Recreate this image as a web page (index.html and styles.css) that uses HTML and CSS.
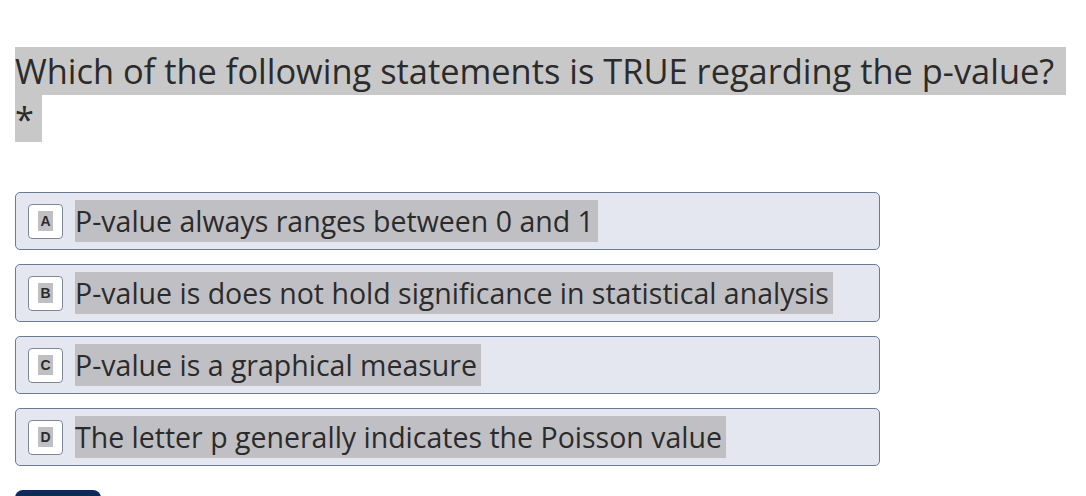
FILE: index.html
```html
<!DOCTYPE html>
<html lang="en">
<head>
  <meta charset="UTF-8">
  <title>Quiz Question</title>
  <link rel="stylesheet" href="styles.css">
</head>
<body>

  <!-- Question -->
  <div class="question">
    <span class="sel title-line">Which of the following statements is TRUE regarding the p-value?</span>
    <span class="sel title-line star">*</span>
  </div>

  <!-- Choices -->
  <div class="choices">
    <div class="choice">
      <span class="badge"><span class="sel-letter">A</span></span>
      <span class="sel choice-text">P-value always ranges between 0 and 1</span>
    </div>
    <div class="choice">
      <span class="badge"><span class="sel-letter">B</span></span>
      <span class="sel choice-text">P-value is does not hold significance in statistical analysis</span>
    </div>
    <div class="choice">
      <span class="badge"><span class="sel-letter">C</span></span>
      <span class="sel choice-text">P-value is a graphical measure</span>
    </div>
    <div class="choice">
      <span class="badge"><span class="sel-letter">D</span></span>
      <span class="sel choice-text">The letter p generally indicates the Poisson value</span>
    </div>
  </div>

  <!-- Submit button, only its top edge is in view -->
  <button class="submit" aria-label="Submit"></button>

</body>
</html>
```

FILE: styles.css
```css
html {
  overflow: hidden;
}

body {
  margin: 0;
  padding: 47px 0 0 15px;
  font-family: "Open Sans", "Noto Sans", sans-serif;
  color: #2b2b2b;
  background: #fff;
}

.sel {
  background: #c8c8c8;
}

.question {
  font-size: 34.4px;
  margin-bottom: 50px;
}

.title-line {
  display: inline-block;
  line-height: 47.5px;
  padding-right: 12px;
  vertical-align: top;
}

.star {
  display: block;
  width: fit-content;
  padding-right: 8px;
}

.choices {
  display: flex;
  flex-direction: column;
  gap: 14px;
  width: 865px;
}

.choice {
  display: flex;
  align-items: center;
  gap: 12px;
  height: 58px;
  box-sizing: border-box;
  padding: 0 12px;
  background: #e4e7ef;
  border: 1.5px solid #6d7a93;
  border-radius: 5px;
}

.badge {
  display: flex;
  align-items: center;
  justify-content: center;
  width: 35px;
  height: 35px;
  box-sizing: border-box;
  background: #fff;
  border: 1px solid #7d879a;
  border-radius: 4px;
  font-family: "Liberation Sans", Arial, sans-serif;
  font-weight: bold;
  font-size: 14px;
}

.sel-letter {
  background: #c0c0c4;
  padding: 2px 2px;
}

.choice-text {
  background: #c0c0c4;
  font-size: 28.5px;
  line-height: 42px;
  padding-right: 4px;
}

.submit {
  display: block;
  margin-top: 24px;
  width: 86px;
  height: 40px;
  background: #0c2a5e;
  border: none;
  border-radius: 8px;
}
```
